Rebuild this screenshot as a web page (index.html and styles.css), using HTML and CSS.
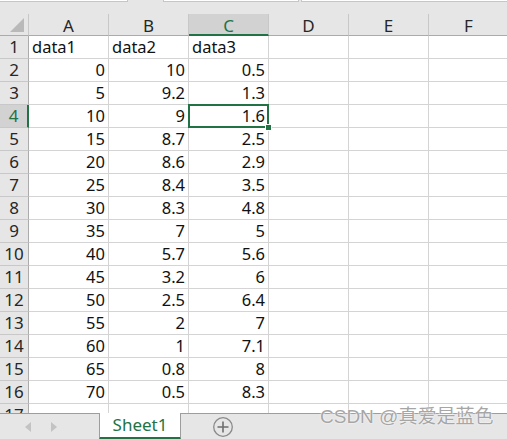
FILE: index.html
```html
<!DOCTYPE html>
<html>
<head>
<meta charset="utf-8">
<link rel="stylesheet" href="styles.css">
</head>
<body>
<div class="app">
  <div class="topstrip">
    <div class="fbox fbox1"></div>
    <div class="fbox fbox2"></div>
    <div class="fbox fbox3"></div>
  </div>
  <div class="gridwrap">
    <div class="sheet">
      <div class="corner"><span class="tri"></span></div>
      <div class="ch">A</div><div class="ch">B</div><div class="ch sel">C</div><div class="ch">D</div><div class="ch">E</div><div class="ch">F</div>

      <div class="rh">1</div><div class="c t">data1</div><div class="c t">data2</div><div class="c t">data3</div><div class="c"></div><div class="c"></div><div class="c"></div>
      <div class="rh">2</div><div class="c">0</div><div class="c">10</div><div class="c">0.5</div><div class="c"></div><div class="c"></div><div class="c"></div>
      <div class="rh">3</div><div class="c">5</div><div class="c">9.2</div><div class="c">1.3</div><div class="c"></div><div class="c"></div><div class="c"></div>
      <div class="rh sel">4</div><div class="c">10</div><div class="c">9</div><div class="c active">1.6<span class="handle"></span></div><div class="c"></div><div class="c"></div><div class="c"></div>
      <div class="rh">5</div><div class="c">15</div><div class="c">8.7</div><div class="c">2.5</div><div class="c"></div><div class="c"></div><div class="c"></div>
      <div class="rh">6</div><div class="c">20</div><div class="c">8.6</div><div class="c">2.9</div><div class="c"></div><div class="c"></div><div class="c"></div>
      <div class="rh">7</div><div class="c">25</div><div class="c">8.4</div><div class="c">3.5</div><div class="c"></div><div class="c"></div><div class="c"></div>
      <div class="rh">8</div><div class="c">30</div><div class="c">8.3</div><div class="c">4.8</div><div class="c"></div><div class="c"></div><div class="c"></div>
      <div class="rh">9</div><div class="c">35</div><div class="c">7</div><div class="c">5</div><div class="c"></div><div class="c"></div><div class="c"></div>
      <div class="rh">10</div><div class="c">40</div><div class="c">5.7</div><div class="c">5.6</div><div class="c"></div><div class="c"></div><div class="c"></div>
      <div class="rh">11</div><div class="c">45</div><div class="c">3.2</div><div class="c">6</div><div class="c"></div><div class="c"></div><div class="c"></div>
      <div class="rh">12</div><div class="c">50</div><div class="c">2.5</div><div class="c">6.4</div><div class="c"></div><div class="c"></div><div class="c"></div>
      <div class="rh">13</div><div class="c">55</div><div class="c">2</div><div class="c">7</div><div class="c"></div><div class="c"></div><div class="c"></div>
      <div class="rh">14</div><div class="c">60</div><div class="c">1</div><div class="c">7.1</div><div class="c"></div><div class="c"></div><div class="c"></div>
      <div class="rh">15</div><div class="c">65</div><div class="c">0.8</div><div class="c">8</div><div class="c"></div><div class="c"></div><div class="c"></div>
      <div class="rh">16</div><div class="c">70</div><div class="c">0.5</div><div class="c">8.3</div><div class="c"></div><div class="c"></div><div class="c"></div>
      <div class="rh">17</div><div class="c"></div><div class="c"></div><div class="c"></div><div class="c"></div><div class="c"></div><div class="c"></div>
    </div>
  </div>
  <div class="tabbar">
    <div class="navs">
      <svg width="10" height="12" viewBox="0 0 10 12"><path d="M8 1 L2 6 L8 11 Z" fill="#c3c3c3"/></svg>
      <svg width="10" height="12" viewBox="0 0 10 12"><path d="M2 1 L8 6 L2 11 Z" fill="#c3c3c3"/></svg>
    </div>
    <div class="tab">Sheet1</div>
    <div class="add">
      <svg width="22" height="22" viewBox="0 0 22 22"><circle cx="11" cy="11" r="9.3" fill="none" stroke="#8a8a8a" stroke-width="1.3"/><path d="M11 5.5 V16.5 M5.5 11 H16.5" stroke="#6e6e6e" stroke-width="1.6"/></svg>
    </div>
  </div>
  <div class="watermark">CSDN @真爱是蓝色</div>
</div>
</body>
</html>
```
FILE: styles.css
```css
html, body {
  margin: 0;
  padding: 0;
  background: #ffffff;
  overflow: hidden;
}
.app {
  position: relative;
  width: 507px;
  height: 439px;
  overflow: hidden;
  font-family: "Noto Sans", "Liberation Sans", "Noto Sans CJK SC", sans-serif;
  color: #111;
  display: flex;
  flex-direction: column;
}
.topstrip {
  height: 14px;
  background: #e6e6e6;
  display: flex;
  align-items: flex-start;
  flex: none;
}
.fbox {
  height: 1px;
  background: #fff;
  border: 1px solid #c6c6c6;
  border-top: none;
}
.fbox1 { width: 127px; border-left: none; }
.fbox2 { width: 134px; margin-left: 35px; }
.fbox3 { flex: 1; margin-left: 2px; border-right: none; }
.gridwrap {
  height: 399px;
  overflow: hidden;
  flex: none;
}
.sheet {
  display: grid;
  grid-template-columns: 29px repeat(6, 80px);
  grid-template-rows: 22px;
  grid-auto-rows: 23px;
  font-size: 16.5px;
  line-height: 22px;
}
.corner {
  background: #e6e6e6;
  border-right: 1px solid #c8c8c8;
  border-bottom: 1px solid #ababab;
  box-sizing: border-box;
  position: relative;
}
.tri {
  position: absolute;
  right: 4px;
  bottom: 3px;
  width: 0;
  height: 0;
  border-left: 14px solid transparent;
  border-bottom: 14px solid #b9b9b9;
}
.ch {
  background: #e6e6e6;
  border-right: 1px solid #c8c8c8;
  border-bottom: 1px solid #ababab;
  box-sizing: border-box;
  text-align: center;
  font-size: 17px;
  color: #262626;
  line-height: 23px;
}
.ch.sel {
  background: #d2d2d2;
  color: #217346;
  border-bottom: 2px solid #217346;
}
.rh {
  background: #e6e6e6;
  border-right: 1px solid #ababab;
  border-bottom: 1px solid #c8c8c8;
  box-sizing: border-box;
  text-align: center;
  font-size: 17px;
  color: #262626;
}
.rh.sel {
  background: #d2d2d2;
  color: #217346;
  border-right: 2px solid #217346;
}
.c {
  border-right: 1px solid #d4d4d4;
  border-bottom: 1px solid #d4d4d4;
  box-sizing: border-box;
  text-align: right;
  padding: 0 3px;
  white-space: nowrap;
  overflow: visible;
}
.c.t { text-align: left; }
.c.active {
  position: relative;
}
.c.active::after {
  content: "";
  position: absolute;
  left: -1px;
  top: -1px;
  right: -1px;
  bottom: -1px;
  border: 2px solid #217346;
}
.handle {
  position: absolute;
  right: -4px;
  bottom: -4px;
  width: 5px;
  height: 5px;
  background: #217346;
  border: 1px solid #fff;
  z-index: 2;
}
.tabbar {
  flex: 1;
  background: #e6e6e6;
  border-top: 1px solid #9d9d9d;
  display: flex;
  align-items: stretch;
  box-sizing: border-box;
}
.navs {
  width: 99px;
  display: flex;
  align-items: center;
  gap: 16px;
  padding-left: 23px;
  box-sizing: border-box;
}
.tab {
  width: 82px;
  margin-top: -1px;
  background: #fff;
  border-left: 1px solid #9d9d9d;
  border-right: 1px solid #9d9d9d;
  border-bottom: 3px solid #217346;
  box-sizing: border-box;
  color: #217346;
  font-size: 17px;
  text-align: center;
  line-height: 24px;
}
.add {
  margin-left: 31px;
  display: flex;
  align-items: center;
}
.watermark {
  position: absolute;
  left: 320px;
  top: 401px;
  font-size: 19px;
  color: #a6a6a6;
  text-shadow: 0 0 1px #fff, 0 0 2px #fff;
  white-space: nowrap;
  font-family: "Liberation Sans", "Noto Sans CJK SC", sans-serif;
}
```
